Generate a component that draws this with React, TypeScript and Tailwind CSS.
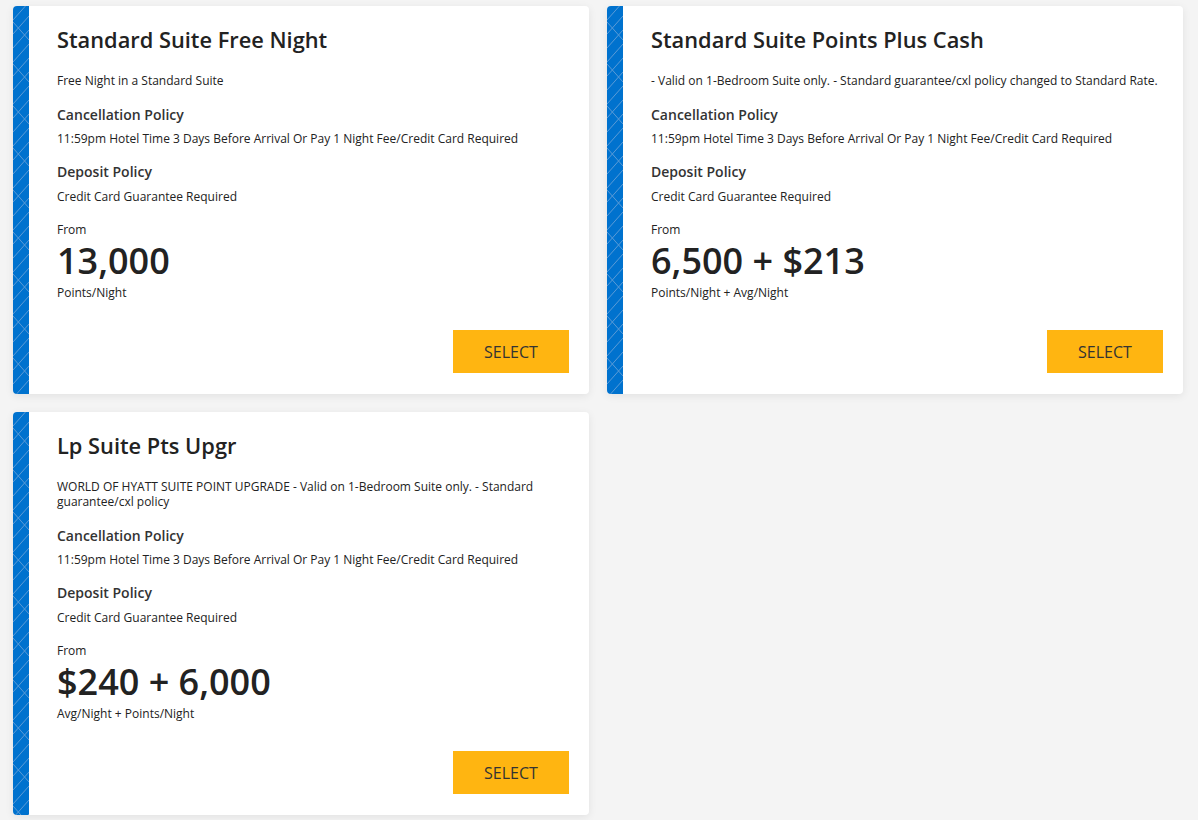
import React from 'react';

type Rate = {
  title: string;
  desc: string;
  price: string;
  unit: string;
};

const RATES: Rate[] = [
  {
    title: 'Standard Suite Free Night',
    desc: 'Free Night in a Standard Suite',
    price: '13,000',
    unit: 'Points/Night',
  },
  {
    title: 'Standard Suite Points Plus Cash',
    desc: '- Valid on 1-Bedroom Suite only. - Standard guarantee/cxl policy changed to Standard Rate.',
    price: '6,500 + $213',
    unit: 'Points/Night + Avg/Night',
  },
  {
    title: 'Lp Suite Pts Upgr',
    desc: 'WORLD OF HYATT SUITE POINT UPGRADE - Valid on 1-Bedroom Suite only. - Standard guarantee/cxl policy',
    price: '$240 + 6,000',
    unit: 'Avg/Night + Points/Night',
  },
];

const Stripe: React.FC<{ id: string }> = ({ id }) => (
  <div className="relative w-[16px] shrink-0 bg-[#0072ce] rounded-l-[4px] overflow-hidden">
    <svg className="absolute inset-0 h-full w-full" aria-hidden="true">
      <defs>
        <pattern id={id} width="16" height="42" patternUnits="userSpaceOnUse">
          <path d="M0 14 L16 -4 M0 28 L16 10 M0 42 L16 24 M0 56 L16 38" stroke="#5a9ad6" strokeWidth="1" fill="none" />
          <path d="M0 16 L16 34" stroke="#5a9ad6" strokeWidth="1" fill="none" />
        </pattern>
      </defs>
      <rect width="100%" height="100%" fill={`url(#${id})`} />
    </svg>
  </div>
);

const RateCard: React.FC<{ rate: Rate; idx: number }> = ({ rate, idx }) => (
  <div className="flex bg-white rounded-[4px] shadow-[0_2px_8px_rgba(0,0,0,0.08)]">
    <Stripe id={`lattice-${idx}`} />
    <div className="flex-1 pl-[28px] pr-[20px] pt-[19px] pb-[21px] text-[#222]">
      <h2 className="text-[21.8px] leading-[30px] font-semibold text-[#222]">{rate.title}</h2>
      <p className="mt-[18px] text-[12px] leading-[15px]">{rate.desc}</p>

      <h3 className="mt-[17px] text-[14px] leading-[20px] font-semibold text-[#333]">Cancellation Policy</h3>
      <p className="mt-[6px] text-[12px] leading-[16px]">
        11:59pm Hotel Time 3 Days Before Arrival Or Pay 1 Night Fee/Credit Card Required
      </p>

      <h3 className="mt-[15px] text-[14px] leading-[20px] font-semibold text-[#333]">Deposit Policy</h3>
      <p className="mt-[7px] text-[12px] leading-[16px]">Credit Card Guarantee Required</p>

      <p className="mt-[17px] text-[12px] leading-[16px]">From</p>
      <p className="mt-[1px] text-[36px] leading-[44px] font-semibold text-[#222]">{rate.price}</p>
      <p className="mt-[2px] text-[12px] leading-[16px]">{rate.unit}</p>

      <div className="mt-[29px] flex justify-end">
        <button className="w-[116px] h-[43px] bg-[#ffb511] text-[16px] text-[#333] uppercase">Select</button>
      </div>
    </div>
  </div>
);

export default function App() {
  return (
    <div className="min-h-screen bg-[#f4f4f4] pt-[6px] pl-[13px] font-['Open_Sans',sans-serif]">
      <div className="grid grid-cols-[576px_576px] gap-[18px] items-start">
        {RATES.map((r, i) => (
          <RateCard key={r.title} rate={r} idx={i} />
        ))}
      </div>
    </div>
  );
}
